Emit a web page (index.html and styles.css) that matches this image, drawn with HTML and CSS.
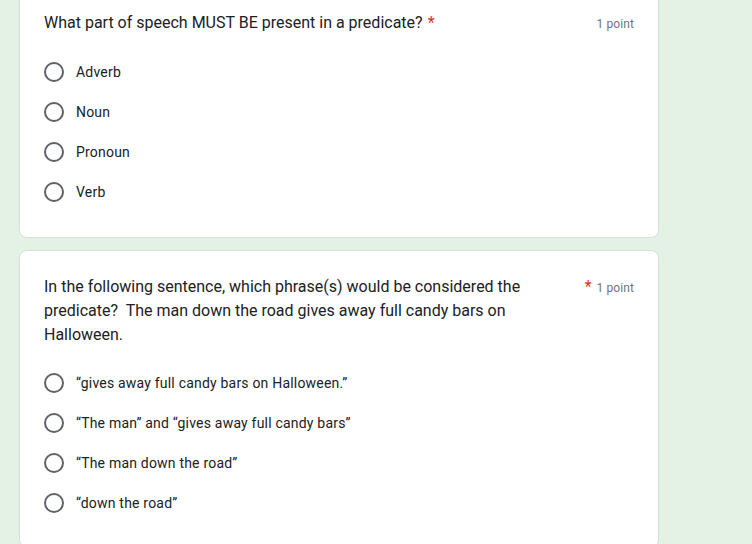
FILE: index.html
```html
<!DOCTYPE html>
<html>
<head>
<meta charset="utf-8">
<link rel="stylesheet" href="styles.css">
</head>
<body>
<div class="page">
  <div class="card card-first">
    <div class="head">
      <div class="title">What part of speech MUST BE present in a predicate?</div>
      <span class="req">*</span>
      <span class="points">1 point</span>
    </div>
    <div class="options">
      <div class="opt"><span class="radio"></span><span class="label">Adverb</span></div>
      <div class="opt"><span class="radio"></span><span class="label">Noun</span></div>
      <div class="opt"><span class="radio"></span><span class="label">Pronoun</span></div>
      <div class="opt"><span class="radio"></span><span class="label">Verb</span></div>
    </div>
  </div>
  <div class="card">
    <div class="head">
      <div class="title">In the following sentence, which phrase(s) would be considered the predicate?&nbsp; The man down the road gives away full candy bars on Halloween.</div>
      <span class="req">*</span>
      <span class="points">1 point</span>
    </div>
    <div class="options">
      <div class="opt"><span class="radio"></span><span class="label">“gives away full candy bars on Halloween.”</span></div>
      <div class="opt"><span class="radio"></span><span class="label">“The man” and “gives away full candy bars”</span></div>
      <div class="opt"><span class="radio"></span><span class="label">“The man down the road”</span></div>
      <div class="opt"><span class="radio"></span><span class="label">“down the road”</span></div>
    </div>
  </div>
</div>
</body>
</html>
```
FILE: styles.css
```css
html, body {
  margin: 0;
  padding: 0;
  background: #e3f2e4;
  font-family: Roboto, "Noto Sans", Arial, sans-serif;
  color: #202124;
  overflow: hidden;
}
.page {
  padding-left: 19px;
  width: 640px;
  display: flex;
  flex-direction: column;
  gap: 12px;
  margin-top: -14px;
}
.card {
  background: #fff;
  border: 1px solid #dadce0;
  border-radius: 8px;
  padding: 24px 24px 24px 24px;
}
.card-first {
  padding-bottom: 25px;
}
.head {
  display: flex;
  align-items: flex-start;
}
.title {
  flex: 0 1 auto;
  font-size: 16px;
  line-height: 24px;
  letter-spacing: 0;
}
.req {
  color: #d93025;
  font-size: 16px;
  line-height: 24px;
  margin-left: 5px;
}
.points {
  margin-left: auto;
  padding-left: 5px;
  padding-top: 1px;
  flex: none;
  font-size: 12px;
  line-height: 24px;
  color: #70757a;
  letter-spacing: 0.1px;
  white-space: nowrap;
}
.options {
  margin-top: 16px;
  display: flex;
  flex-direction: column;
}
.opt {
  display: flex;
  align-items: center;
  height: 40px;
}
.radio {
  box-sizing: border-box;
  width: 20px;
  height: 20px;
  border: 2px solid #5f6368;
  border-radius: 50%;
  flex: none;
}
.label {
  margin-left: 12px;
  font-size: 14px;
  line-height: 20px;
  letter-spacing: 0.2px;
}
```
